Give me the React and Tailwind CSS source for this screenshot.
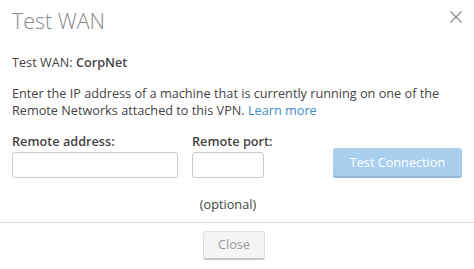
export default function App() {
  return (
    <div className="w-[474px] h-[269px] bg-white text-[#444] overflow-hidden" style={{ fontFamily: '"Open Sans", sans-serif' }}>
      <div className="flex items-start justify-between pl-[12px] pr-[12px] pt-[6px] h-[44px]">
        <h1 className="text-[21.4px] font-light text-[#888] leading-[30px]">Test WAN</h1>
        <svg className="mt-[5px]" width="12" height="12" viewBox="0 0 12 12" fill="none" stroke="#8a8a8a" strokeWidth="1.3">
          <path d="M0.5 0.5 L11.5 11.5 M11.5 0.5 L0.5 11.5" />
        </svg>
      </div>
      <div className="px-[12px] text-[12.7px] leading-[17px]">
        <p className="mt-[10px]">Test WAN: <span className="font-semibold">CorpNet</span></p>
        <p className="mt-[14px]">
          Enter the IP address of a machine that is currently running on one of the Remote Networks attached to this VPN.{" "}
          <a className="text-[#3b8bc9]">Learn more</a>
        </p>
        <div className="flex mt-[14px]">
          <div className="flex flex-col w-[166px]">
            <label className="font-semibold leading-[17px]">Remote address:</label>
            <div className="mt-[2px] h-[26px] border border-[#ccc] rounded-[3px]" />
          </div>
          <div className="flex flex-col ml-[14px] w-[72px]">
            <label className="font-semibold leading-[17px] whitespace-nowrap">Remote port:</label>
            <div className="mt-[2px] h-[26px] border border-[#ccc] rounded-[3px]" />
            <div className="mt-[18px] text-center whitespace-nowrap -mx-[10px]">(optional)</div>
          </div>
          <div className="ml-auto mt-[15px]">
            <button className="w-[129px] h-[30px] rounded-[3px] bg-[#a8d0ee] border-b-2 border-[#8fb6d6] text-white text-[12.7px]">Test Connection</button>
          </div>
        </div>
      </div>
      <div className="mt-[9px] border-t border-[#ddd] flex justify-center pt-[8px]">
        <button className="ml-[-6px] w-[62px] h-[29px] rounded-[3px] bg-[#f4f4f4] border border-[#ddd] border-b-2 border-b-[#c8c8c8] text-[#999] text-[12.7px]">Close</button>
      </div>
    </div>
  );
}
